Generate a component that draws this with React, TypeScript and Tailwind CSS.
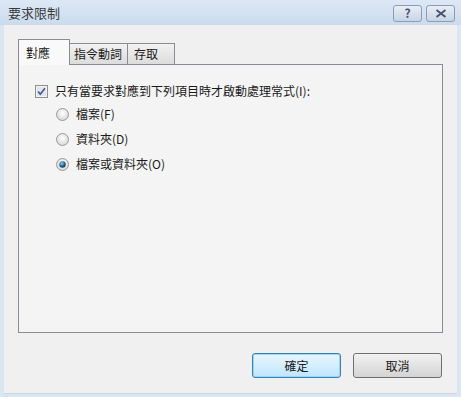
import React from "react";

const font = { fontFamily: '"Microsoft JhengHei", "Noto Sans CJK TC", "Liberation Sans", sans-serif' };

function Radio({ checked }: { checked?: boolean }) {
  return (
    <svg width="13" height="13" viewBox="0 0 13 13">
      <defs>
        <radialGradient id={checked ? "rc" : "ru"} cx="50%" cy="40%" r="60%">
          <stop offset="0%" stopColor="#ffffff" />
          <stop offset="100%" stopColor="#d6d6d6" />
        </radialGradient>
        <radialGradient id="dot" cx="40%" cy="35%" r="70%">
          <stop offset="0%" stopColor="#9ad2f5" />
          <stop offset="60%" stopColor="#1d5f8e" />
          <stop offset="100%" stopColor="#0c3b5e" />
        </radialGradient>
      </defs>
      <circle cx="6.5" cy="6.5" r="6" fill={`url(#${checked ? "rc" : "ru"})`} stroke="#9a9a9a" strokeWidth="1" />
      {checked && <circle cx="6.5" cy="6.5" r="3.2" fill="url(#dot)" />}
    </svg>
  );
}

function Check() {
  return (
    <svg width="13" height="13" viewBox="0 0 13 13">
      <rect x="0.5" y="0.5" width="12" height="12" fill="#f4f4f4" stroke="#8e8f8f" />
      <rect x="2" y="2" width="9" height="9" fill="#e2e6ec" />
      <path d="M3 6.5 L5.3 9.2 L10 3.2" fill="none" stroke="#4a5f97" strokeWidth="1.8" />
    </svg>
  );
}

export default function App() {
  return (
    <div className="w-[461px] h-[397px] bg-[#dbe6f3] flex flex-col text-[12px] leading-[16px] text-[#1a1a1a]" style={font}>
      <div className="h-[25px] flex items-center justify-between pl-[8px] pr-[6px] bg-gradient-to-b from-[#dde8f5] to-[#cbdbec]">
        <span className="text-[13px] text-[#3a3a3a]">要求限制</span>
        <div className="flex gap-[4px] mt-[1px]">
          <div className="w-[29px] h-[17px] rounded-[3px] border border-[#8d9cb0] bg-gradient-to-b from-[#e8eef6] to-[#c8d5e4] flex items-center justify-center text-[12px] font-bold text-[#4a5568]">?</div>
          <div className="w-[29px] h-[17px] rounded-[3px] border border-[#8d9cb0] bg-gradient-to-b from-[#e8eef6] to-[#c8d5e4] flex items-center justify-center">
            <svg width="12" height="9" viewBox="0 0 12 9"><path d="M1.5 1 L10.5 8 M10.5 1 L1.5 8" stroke="#4a5568" strokeWidth="2" /></svg>
          </div>
        </div>
      </div>
      <div className="flex-1 mx-[4px] mb-[3px] bg-[#f0f0f0] flex flex-col border-b border-[#c9d5e3]">
        <div className="px-[14px] pt-[14px]">
          <div className="flex items-end h-[25px]">
            <div className="w-[52px] h-[26px] bg-[#f9f9f9] border border-[#898c95] border-b-0 flex items-center pl-[7px] relative z-10 mb-[-1px]">對應</div>
            <div className="w-[58px] h-[21px] bg-gradient-to-b from-[#f2f2f2] to-[#dcdcdc] border border-[#898c95] border-l-0 border-b-0 flex items-center pl-[4px]">指令動詞</div>
            <div className="w-[47px] h-[21px] bg-gradient-to-b from-[#f2f2f2] to-[#dcdcdc] border border-[#898c95] border-l-0 border-b-0 flex items-center pl-[6px]">存取</div>
          </div>
          <div className="h-[269px] border border-[#898c95] bg-[#f4f4f4] pl-[16px] pt-[18px]">
            <div className="flex items-center gap-[7px]">
              <Check />
              <span>只有當要求對應到下列項目時才啟動處理常式(I):</span>
            </div>
            <div className="pl-[21px] flex flex-col gap-[9px] mt-[7px]">
              <div className="flex items-center gap-[7px]"><Radio /><span>檔案(F)</span></div>
              <div className="flex items-center gap-[7px]"><Radio /><span>資料夾(D)</span></div>
              <div className="flex items-center gap-[7px]"><Radio checked /><span>檔案或資料夾(O)</span></div>
            </div>
          </div>
        </div>
        <div className="flex justify-end gap-[12px] pr-[15px] mt-[20px]">
          <div className="w-[89px] h-[25px] rounded-[3px] border border-[#3c7fb1] bg-gradient-to-b from-[#eaf6fd] to-[#bee6fd] shadow-[inset_0_0_0_1px_#94d7f7] flex items-center justify-center">確定</div>
          <div className="w-[89px] h-[25px] rounded-[3px] border border-[#707070] bg-gradient-to-b from-[#f2f2f2] to-[#d4d4d4] flex items-center justify-center">取消</div>
        </div>
      </div>
    </div>
  );
}
